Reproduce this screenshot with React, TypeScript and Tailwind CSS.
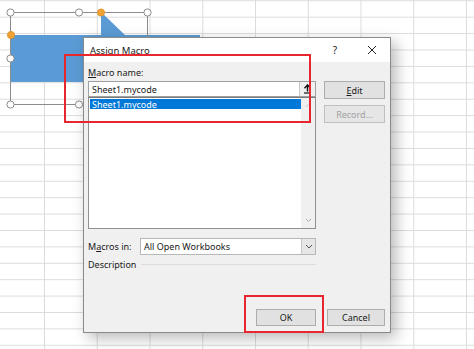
import React from "react";

const font = { fontFamily: '"Noto Sans", "Segoe UI", sans-serif' };

function Btn({ children, className = "" }: { children: React.ReactNode; className?: string }) {
  return (
    <div
      className={`flex items-center justify-center bg-[#e1e1e1] border border-[#adadad] text-[9px] leading-none ${className}`}
    >
      {children}
    </div>
  );
}

export default function App() {
  return (
    <div
      className="relative w-[474px] h-[349px] overflow-hidden bg-white bg-[linear-gradient(to_right,#dcdcdc_1px,transparent_1px),linear-gradient(to_bottom,#dcdcdc_1px,transparent_1px)] bg-[size:52.75px_16.42px] bg-[position:44px_0.3px]"
      style={font}
    >
      {/* shape + selection handles */}
      <svg className="absolute left-0 top-0" width="474" height="349" viewBox="0 0 474 349">
        <polygon points="11,35 101,35 101,12 125,35 200,35 200,82 11,82" fill="#5b9bd5" />
        <g stroke="#8c8c8c" strokeWidth="1" fill="none">
          <line x1="10.5" y1="12.5" x2="147.5" y2="12.5" />
          <line x1="10.5" y1="12.5" x2="10.5" y2="104.5" />
          <line x1="10.5" y1="104.5" x2="100" y2="104.5" />
          <line x1="147.5" y1="12.5" x2="147.5" y2="60" />
        </g>
        <g fill="#ffffff" stroke="#8c8c8c" strokeWidth="1">
          <circle cx="10.5" cy="12.5" r="3.6" />
          <circle cx="79" cy="12.5" r="3.6" />
          <circle cx="147.5" cy="12.5" r="3.6" />
          <circle cx="10.5" cy="58.5" r="3.6" />
          <circle cx="10.5" cy="104.5" r="3.6" />
          <circle cx="79" cy="104.5" r="3.6" />
        </g>
        <g fill="#f0a232" stroke="#d9912a" strokeWidth="0.8">
          <circle cx="101" cy="12.5" r="3.6" />
          <circle cx="11" cy="35" r="3.6" />
        </g>
      </svg>

      {/* dialog */}
      <div className="absolute left-[83px] top-[37px] w-[308px] h-[296px] flex flex-col border border-[#8a8a8a] bg-[#f0f0f0] shadow-[5px_5px_14px_rgba(0,0,0,0.28)] text-[#1a1a1a]">
        {/* title bar */}
        <div className="h-[24px] bg-white flex items-center pl-[6px] shrink-0">
          <span className="text-[9.5px] leading-none pt-[1px] flex-1">Assign Macro</span>
          <span className="text-[10px] leading-none w-[10px] text-center mr-[27px]">?</span>
          <svg width="10" height="10" viewBox="0 0 10 10" className="mr-[13px]">
            <path d="M1 1 L9 9 M9 1 L1 9" stroke="#222" strokeWidth="1" />
          </svg>
        </div>

        {/* body */}
        <div className="flex-1 flex flex-col pl-[4px] pr-[5px] pt-[5px] pb-[6px]">
          <div className="text-[9px] leading-[12px] h-[12px]">
            <span className="underline underline-offset-1">M</span>acro name:
          </div>
          <div className="flex mt-[2px] gap-[8px]">
            <div className="w-[228px] flex flex-col">
              <div className="h-[16px] flex bg-white border border-[#a0a0a0]">
                <div className="flex-1 flex items-center pl-[3px] text-[9px] leading-none">Sheet1.mycode</div>
                <div className="w-[16px] border-l border-[#c8c8c8] bg-[#f0f0f0] flex items-center justify-center">
                  <svg width="9" height="10" viewBox="0 0 9 10">
                    <path d="M4.5 1 L4.5 7.5" stroke="#111" strokeWidth="1.4" />
                    <path d="M1.5 4.2 L4.5 1 L7.5 4.2" stroke="#111" strokeWidth="1.4" fill="none" />
                    <path d="M1 9 L8 9" stroke="#111" strokeWidth="1.2" />
                  </svg>
                </div>
              </div>
              <div className="h-[132px] flex bg-white border border-[#909090] border-t-[#7a7a7a]">
                <div className="flex-1 pt-[1px] pl-[1px]">
                  <div className="h-[10px] bg-[#0078d7] text-white text-[9px] leading-none flex items-center pl-[2px]">
                    Sheet1.mycode
                  </div>
                </div>
                <div className="w-[14px] bg-[#f0f0f0] flex flex-col items-center justify-between py-[5px]">
                  <svg width="7" height="5" viewBox="0 0 7 5">
                    <path d="M1 4 L3.5 1.5 L6 4" stroke="#c8c8c8" strokeWidth="1" fill="none" />
                  </svg>
                  <svg width="7" height="5" viewBox="0 0 7 5">
                    <path d="M1 1 L3.5 3.5 L6 1" stroke="#a8a8a8" strokeWidth="1" fill="none" />
                  </svg>
                </div>
              </div>
            </div>
            <div className="w-[61px] flex flex-col gap-[6px]">
              <Btn className="h-[18px]">
                <span>
                  <span className="underline underline-offset-1">E</span>dit
                </span>
              </Btn>
              <Btn className="h-[18px] text-[#a0a0a0] border-[#bfbfbf] bg-[#e6e6e6]">Record...</Btn>
            </div>
          </div>

          <div className="flex items-center mt-[9px] w-[228px]">
            <div className="w-[52px] text-[9px] leading-none">
              M<span className="underline underline-offset-1">a</span>cros in:
            </div>
            <div className="flex-1 h-[17px] flex bg-white border border-[#b8b8b8]">
              <div className="flex-1 flex items-center pl-[3px] text-[9px] leading-none">All Open Workbooks</div>
              <div className="w-[14px] bg-[#e6e6e6] border-l border-[#c8c8c8] flex items-center justify-center">
                <svg width="8" height="5" viewBox="0 0 8 5">
                  <path d="M1 1 L4 4 L7 1" stroke="#555" strokeWidth="1" fill="none" />
                </svg>
              </div>
            </div>
          </div>

          <div className="flex items-center mt-[3px] w-[228px] h-[12px]">
            <span className="text-[9px] leading-none">Description</span>
            <div className="flex-1 ml-[5px] border-t border-[#dcdcdc]" />
          </div>

          <div className="mt-auto flex justify-end gap-[11px]">
            <Btn className="w-[60px] h-[17px] border-[#0078d7] border-[1.5px]">OK</Btn>
            <Btn className="w-[58px] h-[17px]">Cancel</Btn>
          </div>
        </div>
      </div>

      {/* red highlight boxes */}
      <div className="absolute left-[64px] top-[54px] w-[247px] h-[69px] border-2 border-[#e8262d]" />
      <div className="absolute left-[244px] top-[295px] w-[80px] h-[38px] border-2 border-[#e8262d]" />
    </div>
  );
}
